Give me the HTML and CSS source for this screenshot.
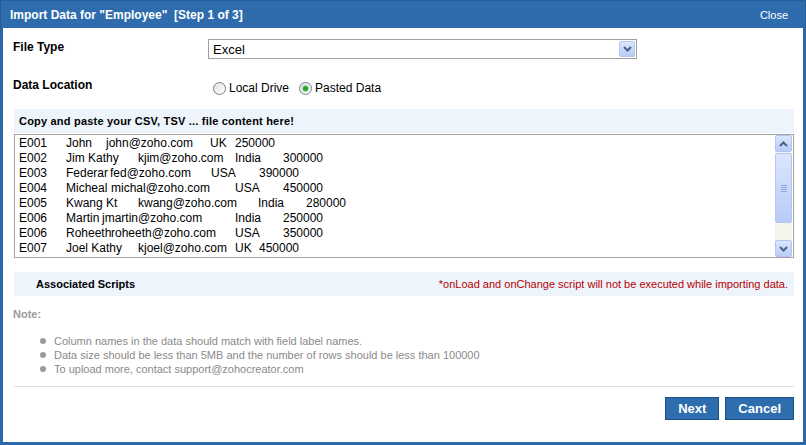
FILE: index.html
```html
<!DOCTYPE html>
<html lang="en">
<head>
	<meta charset="UTF-8">
	<title>Import Data</title>
	<link rel="stylesheet" href="styles.css">
</head>
<body>
	<div class="dialog">
		<header class="dialog-title">
			<span class="title-text">Import Data for "Employee"&nbsp; [Step 1 of 3]</span>
			<a class="close" href="#">Close</a>
		</header>
		<section class="dialog-body">
			<div class="form-row row-type">
				<label class="form-label">File Type</label>
				<div class="select">
					<span class="select-value">Excel</span>
					<span class="xp-btn select-btn">
						<svg width="9" height="6" viewBox="0 0 9 6"><path d="M1 1l3.5 3.5L8 1" fill="none" stroke="#4d6185" stroke-width="2"/></svg>
					</span>
				</div>
			</div>
			<div class="form-row row-location">
				<label class="form-label">Data Location</label>
				<div class="radios">
					<span class="radio"></span><span class="radio-text">Local Drive</span>
					<span class="radio checked"></span><span class="radio-text">Pasted Data</span>
				</div>
			</div>

			<div class="band paste-head">Copy and paste your CSV, TSV ... file content here!</div>
			<div class="paste-box">
				<div class="paste-text">
					<div class="line r1"><span>E001</span><span>John</span><span>john@zoho.com</span><span>UK</span><span>250000</span></div>
					<div class="line r2"><span>E002</span><span>Jim Kathy</span><span>kjim@zoho.com</span><span>India</span><span>300000</span></div>
					<div class="line r3"><span>E003</span><span>Federar</span><span>fed@zoho.com</span><span>USA</span><span>390000</span></div>
					<div class="line r4"><span>E004</span><span>Micheal</span><span>michal@zoho.com</span><span>USA</span><span>450000</span></div>
					<div class="line r5"><span>E005</span><span>Kwang Kt</span><span>kwang@zoho.com</span><span>India</span><span>280000</span></div>
					<div class="line r6"><span>E006</span><span>Martin</span><span>jmartin@zoho.com</span><span>India</span><span>250000</span></div>
					<div class="line r7"><span>E006</span><span>Roheeth</span><span>roheeth@zoho.com</span><span>USA</span><span>350000</span></div>
					<div class="line r8"><span>E007</span><span>Joel Kathy</span><span>kjoel@zoho.com</span><span>UK</span><span>450000</span></div>
				</div>
				<div class="scrollbar">
					<span class="xp-btn scroll-btn">
						<svg width="9" height="6" viewBox="0 0 9 6"><path d="M1 5l3.5-3.5L8 5" fill="none" stroke="#4d6185" stroke-width="2"/></svg>
					</span>
					<span class="xp-btn scroll-thumb">
						<svg width="6" height="7" viewBox="0 0 6 7"><path d="M0 .5h6M0 2.5h6M0 4.5h6M0 6.5h6" stroke="#8fa8e0" stroke-width="1"/></svg>
					</span>
					<span class="scroll-track"></span>
					<span class="xp-btn scroll-btn">
						<svg width="9" height="6" viewBox="0 0 9 6"><path d="M1 1l3.5 3.5L8 1" fill="none" stroke="#4d6185" stroke-width="2"/></svg>
					</span>
				</div>
			</div>

			<div class="band scripts">
				<span class="scripts-title">Associated Scripts</span>
				<span class="scripts-warn">*onLoad and onChange script will not be executed while importing data.</span>
			</div>

			<div class="note">
				<p class="note-title">Note:</p>
				<ul class="note-list">
					<li>Column names in the data should match with field label names.</li>
					<li>Data size should be less than 5MB and the number of rows should be less than 100000</li>
					<li>To upload more, contact support@zohocreator.com</li>
				</ul>
			</div>

			<footer class="actions">
				<button class="btn">Next</button>
				<button class="btn">Cancel</button>
			</footer>
		</section>
	</div>
</body>
</html>
```
FILE: styles.css
```css
html{
	box-sizing: border-box;
	font-family: "Liberation Sans", Arial, sans-serif;
	font-size: 12px;
}
*,
*:before,
*:after{
	box-sizing: inherit;
}

body{
	margin: 0;
	background-color: #fff;
}

.dialog{
	width: 806px;
	height: 445px;
	display: flex;
	flex-direction: column;
}
.dialog-title{
	height: 28px;
	flex-shrink: 0;
	display: flex;
	justify-content: space-between;
	align-items: center;
	padding: 0 17px 0 9px;
	background-color: #2e6cad;
	border: 1px solid #245d98;
	border-bottom: none;
	color: #fff;
}
.title-text{
	font-weight: bold;
	font-size: 12px;
}
.close{
	color: #fff;
	font-size: 11px;
	text-decoration: none;
}

.dialog-body{
	flex-grow: 1;
	display: flex;
	flex-direction: column;
	padding: 0 9px 0 11px;
	border: 3px solid #2c68a7;
	border-top: none;
}

.form-row{
	display: flex;
	align-items: flex-start;
}
.row-type{
	margin-top: 11px;
}
.row-location{
	margin-top: 18px;
}
.form-label{
	width: 195px;
	flex-shrink: 0;
	line-height: 16px;
	font-weight: bold;
	font-size: 12px;
	color: #000;
	margin-left: -1px;
	padding-right: 1px;
}

.select{
	width: 429px;
	height: 20px;
	display: flex;
	align-items: center;
	justify-content: space-between;
	border: 1px solid #a0a0a0;
	padding: 1px 1px 1px 4px;
	font-size: 13px;
}
.xp-btn{
	display: flex;
	align-items: center;
	justify-content: center;
	background: linear-gradient(#dbe6fd, #b8ccf9);
	border: 1px solid #b3c6f0;
	border-radius: 2px;
}
.select-btn{
	width: 16px;
	height: 16px;
}

.radios{
	display: flex;
	align-items: center;
	margin-top: 3px;
	padding-left: 5px;
	height: 16px;
}
.radio{
	width: 13px;
	height: 13px;
	border-radius: 50%;
	border: 1px solid #6d8299;
	background: linear-gradient(135deg, #e2e1da, #fff);
	position: relative;
}
.radio.checked:after{
	content: "";
	position: absolute;
	left: 3px;
	top: 3px;
	width: 5px;
	height: 5px;
	border-radius: 50%;
	background-color: #2aa32a;
	box-shadow: 0 0 1px 1px #a8dba8;
}
.radio-text{
	margin-left: 3px;
	margin-right: 10px;
	font-size: 12px;
}

.band{
	height: 24px;
	display: flex;
	align-items: center;
	background-color: #edf4fc;
	font-size: 11px;
}
.paste-head{
	margin-top: 13px;
	padding-left: 5px;
	font-weight: bold;
	letter-spacing: .2px;
}

.paste-box{
	margin-top: 1px;
	height: 124px;
	display: flex;
	border: 1px solid #a3a3a3;
}
.paste-text{
	flex-grow: 1;
	padding: 1px 4px;
	overflow: hidden;
	font-size: 12px;
	line-height: 15px;
	color: #000;
}
.line{
	display: grid;
	justify-content: start;
	white-space: nowrap;
}
.r1{ grid-template-columns: 47px 40px 104px 25px auto; }
.r2{ grid-template-columns: 47px 72px 97px 48px auto; }
.r3{ grid-template-columns: 47px 44px 101px 48px auto; }
.r4{ grid-template-columns: 47px 45px 124px 48px auto; }
.r5{ grid-template-columns: 47px 72px 120px 48px auto; }
.r6{ grid-template-columns: 47px 36px 133px 48px auto; }
.r7{ grid-template-columns: 47px 45px 124px 48px auto; }
.r8{ grid-template-columns: 47px 72px 97px 24px auto; }

.scrollbar{
	width: 17px;
	margin: 0 1px 0 0;
	display: flex;
	flex-direction: column;
	background-color: #f4f3ee;
}
.scroll-btn{
	height: 17px;
}
.scroll-thumb{
	margin-top: 1px;
	height: 70px;
}
.scroll-track{
	flex-grow: 1;
}

.scripts{
	margin-top: 14px;
	justify-content: space-between;
	padding: 0 6px 0 22px;
}
.scripts-title{
	font-weight: bold;
}
.scripts-warn{
	color: #b80000;
}

.note{
	margin-top: 11px;
	font-size: 11px;
	color: #8a8a8a;
}
.note-title{
	margin: 0 0 0 -1px;
	font-weight: bold;
	color: #9a9a9a;
	line-height: 14px;
}
.note-list{
	margin: 13px 0 0;
	padding-left: 26px;
	list-style: none;
}
.note-list li{
	line-height: 14px;
	position: relative;
	padding-left: 14px;
}
.note-list li:before{
	content: "";
	position: absolute;
	left: 0;
	top: 4px;
	width: 6px;
	height: 6px;
	border-radius: 50%;
	background-color: #9a9a9a;
}

.actions{
	margin-top: 10px;
	padding-top: 10px;
	border-top: 1px solid #d6e1ea;
	display: flex;
	justify-content: flex-end;
	gap: 6px;
}
.btn{
	height: 23px;
	padding: 0 12px;
	background-color: #2e6dae;
	border: 1px solid #1f4f80;
	color: #fff;
	font-family: "Liberation Sans", Arial, sans-serif;
	font-weight: bold;
	font-size: 13px;
	cursor: pointer;
}
```
